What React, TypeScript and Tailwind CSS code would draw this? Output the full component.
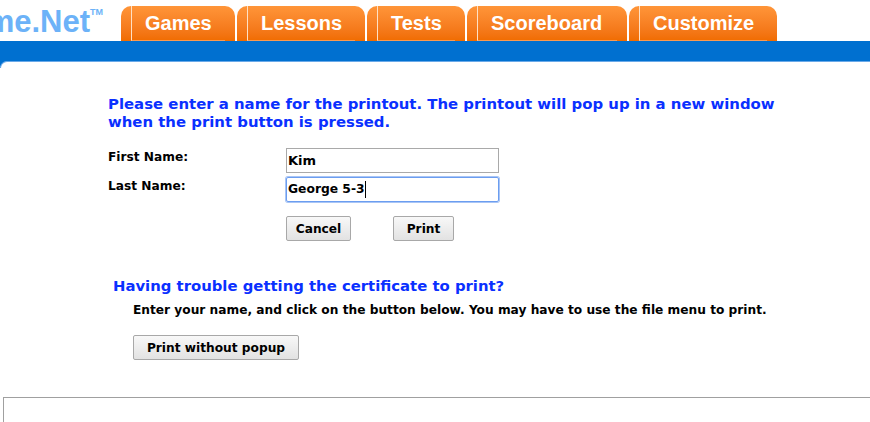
const tabs = [
  { label: "Games", width: "w-[114px]" },
  { label: "Lessons", width: "w-[128px]" },
  { label: "Tests", width: "w-[98px]" },
  { label: "Scoreboard", width: "w-[160px]" },
  { label: "Customize", width: "w-[148px]" },
];

const body = "font-['Verdana','DejaVu_Sans',sans-serif] font-bold";
const button =
  "h-[25px] rounded-[2px] border border-[#a8a8a8] bg-gradient-to-b from-[#f8f8f8] to-[#e2e2e2] pt-[2px] text-[12.2px] text-black";

function Tab({ label, width }: { label: string; width: string }) {
  return (
    <div
      className={`${width} flex h-[35px] rounded-t-[10px] bg-gradient-to-b from-[#ff9538] to-[#f06c00]`}
    >
      <div className="mr-[10px] ml-[10px] flex flex-1 border-b border-l border-b-[#f99a52] border-l-[#ffe0c4] pl-[13px] pt-[4px]">
        <span className="font-['Liberation_Sans',sans-serif] text-[20px] leading-[26px] font-bold text-white">
          {label}
        </span>
      </div>
    </div>
  );
}

export default function App() {
  return (
    <div className="h-[422px] w-[870px] overflow-hidden bg-white">
      <div className="flex h-[41px] items-end">
        <div className="flex h-[41px] w-[121px] shrink-0 justify-end overflow-hidden">
          <div className="flex shrink-0 items-start pr-[18px] pt-[4px] font-['Liberation_Sans',sans-serif] font-bold text-[#6cb2f8]">
            <span className="text-[31px] leading-[36px]">me.Net</span>
            <span className="text-[9px] leading-[16px]">TM</span>
          </div>
        </div>
        <div className="flex gap-[2px]">
          {tabs.map((t) => (
            <Tab key={t.label} label={t.label} width={t.width} />
          ))}
        </div>
      </div>

      <div className="h-[21px] border-b border-[#6aa9e8] bg-[#0070d0]" />

      <div className={`${body} relative pl-[108px] pt-[33px] text-[12.2px] text-black`}>
        <div className="absolute top-[-1px] left-0 h-[7px] w-[9px] bg-[#0070d0]">
          <div className="h-full w-full rounded-tl-[8px] border-t border-l border-[#6aa9e8] bg-white" />
        </div>

        <p className="w-[700px] text-[14.9px] leading-[18px] text-[#0a30ff]">
          Please enter a name for the printout. The printout will pop up in a new window
          <br />
          when the print button is pressed.
        </p>

        <div className="mt-[17px] flex">
          <div className="w-[178px] shrink-0 pt-[1px] leading-[16px]">First Name:</div>
          <input
            readOnly
            value="Kim"
            className="h-[25px] w-[213px] border border-[#a9a9a9] px-[1px] text-[13px] text-black outline-none"
          />
        </div>
        <div className="mt-[4px] flex">
          <div className="w-[178px] shrink-0 pt-[1px] leading-[16px]">Last Name:</div>
          <div className="flex h-[25px] w-[213px] items-center rounded-[2px] border border-[#6b9df0] px-[1px] text-[12.3px] shadow-[0_0_0_1px_#a9c5f5]">
            <span>George 5-3</span>
            <span className="h-[17px] w-px bg-black" />
          </div>
        </div>

        <div className="mt-[14px] ml-[178px] flex gap-[42px]">
          <button className={`${button} w-[65px]`}>Cancel</button>
          <button className={`${button} w-[61px]`}>Print</button>
        </div>

        <p className="mt-[36px] ml-[5px] text-[14.85px] leading-[18px] text-[#0a30ff]">
          Having trouble getting the certificate to print?
        </p>
        <p className="mt-[7px] ml-[25px] leading-[16px] whitespace-nowrap">
          Enter your name, and click on the button below. You may have to use the file menu to
          print.
        </p>
        <button className={`${button} mt-[17px] ml-[25px] w-[166px]`}>Print without popup</button>
      </div>

      <div className="mt-[37px] ml-[3px] h-[40px] border-t border-l border-[#a0a0a0]" />
    </div>
  );
}
